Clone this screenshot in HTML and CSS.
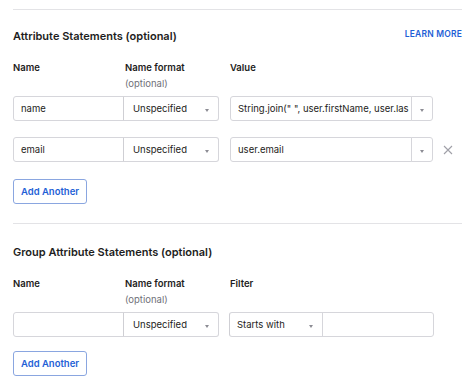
FILE: index.html
```html
<!DOCTYPE html>
<html>
<head>
<meta charset="utf-8">
<link rel="stylesheet" href="styles.css">
</head>
<body>
<div class="page">
  <div class="divider top"></div>
  <div class="section-head">
    <h2 class="title">Attribute Statements (optional)</h2>
    <a class="learn">LEARN MORE</a>
  </div>
  <div class="labels">
    <div class="col-name"><div class="lbl">Name</div></div>
    <div class="col-format"><div class="lbl">Name format</div><div class="opt">(optional)</div></div>
    <div class="col-value"><div class="lbl">Value</div></div>
  </div>
  <div class="row">
    <div class="input name-input">name</div>
    <div class="select fmt">Unspecified<span class="caret"></span></div>
    <div class="value">
      <div class="value-text">String.join(" ", user.firstName, user.las</div>
      <div class="value-btn"><span class="caret"></span></div>
    </div>
  </div>
  <div class="row second">
    <div class="input name-input">email</div>
    <div class="select fmt">Unspecified<span class="caret"></span></div>
    <div class="value">
      <div class="value-text">user.email</div>
      <div class="value-btn"><span class="caret"></span></div>
    </div>
    <svg class="remove" width="10" height="10" viewBox="0 0 10 10"><path d="M1 1L9 9M9 1L1 9" stroke="#a0a0a8" stroke-width="1.1" fill="none"/></svg>
  </div>
  <button class="add">Add Another</button>

  <div class="divider mid"></div>
  <div class="section-head g">
    <h2 class="title">Group Attribute Statements (optional)</h2>
  </div>
  <div class="labels">
    <div class="col-name"><div class="lbl">Name</div></div>
    <div class="col-format"><div class="lbl">Name format</div><div class="opt">(optional)</div></div>
    <div class="col-value"><div class="lbl">Filter</div></div>
  </div>
  <div class="row">
    <div class="input name-input"></div>
    <div class="select fmt">Unspecified<span class="caret"></span></div>
    <div class="filter">
      <div class="select flt">Starts with<span class="caret"></span></div>
      <div class="input flt-text"></div>
    </div>
  </div>
  <button class="add last">Add Another</button>
</div>
</body>
</html>
```
FILE: styles.css
```css
* { box-sizing: border-box; }
body {
  margin: 0;
  background: #fff;
  font-family: Inter, "Noto Sans", sans-serif;
  color: #1d1d21;
}
.page {
  padding: 9px 12px 0 13px;
  width: 474px;
}
.divider {
  height: 1px;
  background: #e3e3e6;
  width: 449px;
}
.section-head {
  margin-top: 18px;
  display: flex;
  justify-content: space-between;
  align-items: center;
  height: 16px;
}
.section-head.g { margin-top: 20px; }
.title {
  margin: 0;
  font-size: 11px;
  font-weight: 600;
  line-height: 16px;
}
.learn {
  font-size: 8.5px;
  font-weight: 600;
  color: #1f5fd6;
  letter-spacing: 0.2px;
  margin-top: -4px;
  margin-right: 0;
}
.labels {
  display: flex;
  margin-top: 16px;
  font-size: 9.5px;
  line-height: 16px;
}
.col-name { width: 112px; }
.col-format { width: 105px; }
.lbl { font-weight: 600; }
.opt { color: #707079; }
.row {
  display: flex;
  align-items: center;
  height: 25px;
  margin-top: 4px;
  font-size: 9.5px;
}
.row.second { margin-top: 16px; }
.input, .select, .value-text, .value-btn {
  height: 25px;
  border: 1px solid #d6d6db;
  display: flex;
  align-items: center;
  white-space: nowrap;
  overflow: hidden;
}
.name-input {
  width: 111px;
  border-radius: 3px 0 0 3px;
  padding-left: 7px;
}
.select {
  position: relative;
  border-radius: 0 3px 3px 0;
  border-left: 1px solid #cfcfd4;
  margin-left: -1px;
  padding-left: 9px;
}
.fmt { width: 96px; }
.caret {
  position: absolute;
  right: 9px;
  top: 12px;
  width: 0;
  height: 0;
  border-left: 2.5px solid transparent;
  border-right: 2.5px solid transparent;
  border-top: 3px solid #8c8c94;
}
.value {
  display: flex;
  margin-left: 11px;
}
.value-text {
  width: 182px;
  border-radius: 3px 0 0 3px;
  padding-left: 7px;
}
.value-btn {
  position: relative;
  width: 22px;
  margin-left: -1px;
  border-radius: 0 3px 3px 0;
}
.value-btn .caret { right: 8px; }
.remove { margin-left: 10px; }
.filter {
  display: flex;
  margin-left: 10px;
}
.flt {
  width: 94px;
  border-radius: 3px 0 0 3px;
  margin-left: 0;
  padding-left: 7px;
}
.flt-text {
  width: 112px;
  margin-left: -1px;
  border-radius: 0 3px 3px 0;
}
.add {
  display: block;
  margin-top: 17px;
  width: 74px;
  height: 25px;
  padding: 0;
  border: 1px solid #8aa6e0;
  border-radius: 3px;
  background: #fff;
  color: #1f5fd6;
  font-family: Inter, "Noto Sans", sans-serif;
  font-size: 9.5px;
  font-weight: 600;
}
.add.last { margin-top: 14px; }
.divider.mid { margin-top: 19px; }
```
